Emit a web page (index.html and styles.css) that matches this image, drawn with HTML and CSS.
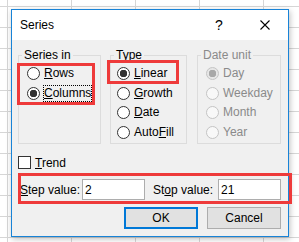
FILE: index.html
```html
<!DOCTYPE html>
<html lang="en">
  <head>
    <meta charset="UTF-8" />
    <title>Series</title>
    <link rel="stylesheet" href="styles.css">
  </head>
  <body>
    <div class="dialog">
      <div class="titlebar">
        <span class="title">Series</span>
        <span class="tb-btn help">?</span>
        <span class="tb-btn close">
          <svg width="10" height="10" viewBox="0 0 10 10">
            <path d="M0.5 0.5L9.5 9.5M9.5 0.5L0.5 9.5" stroke="#000" stroke-width="1.1" fill="none" />
          </svg>
        </span>
      </div>
      <div class="content">
        <div class="groups">
          <fieldset class="group series-in">
            <legend>Series in</legend>
            <div class="rows">
              <div class="opt"><span class="radio"></span><span class="lbl"><u>R</u>ows</span></div>
              <div class="opt"><span class="radio on"></span><span class="lbl focus"><u>C</u>olumns</span></div>
            </div>
          </fieldset>
          <fieldset class="group type">
            <legend>Type</legend>
            <div class="rows">
              <div class="opt"><span class="radio on"></span><span class="lbl"><u>L</u>inear</span></div>
              <div class="opt"><span class="radio"></span><span class="lbl"><u>G</u>rowth</span></div>
              <div class="opt"><span class="radio"></span><span class="lbl"><u>D</u>ate</span></div>
              <div class="opt"><span class="radio"></span><span class="lbl">Auto<u>F</u>ill</span></div>
            </div>
          </fieldset>
          <fieldset class="group date-unit disabled">
            <legend>Date unit</legend>
            <div class="rows">
              <div class="opt"><span class="radio on"></span><span class="lbl">Day</span></div>
              <div class="opt"><span class="radio"></span><span class="lbl">Weekday</span></div>
              <div class="opt"><span class="radio"></span><span class="lbl">Month</span></div>
              <div class="opt"><span class="radio"></span><span class="lbl">Year</span></div>
            </div>
          </fieldset>
        </div>
        <div class="trend">
          <span class="check"></span>
          <span class="trend-lbl"><u>T</u>rend</span>
        </div>
        <div class="values">
          <span class="val-lbl step"><u>S</u>tep value:</span>
          <input class="field" type="text" value="2" />
          <span class="val-lbl stop">St<u>o</u>p value:</span>
          <input class="field" type="text" value="21" />
        </div>
        <div class="actions">
          <button class="btn default">OK</button>
          <button class="btn">Cancel</button>
        </div>
      </div>

      <!-- red annotation boxes -->
      <div class="mark mark-series"></div>
      <div class="mark mark-type"></div>
      <div class="mark mark-values"></div>
    </div>
  </body>
</html>
```

FILE: styles.css
```css
body {
  margin: 0;
  padding: 9px 0 0 11px;
  width: 299px;
  height: 242px;
  box-sizing: border-box;
  overflow: hidden;
  background-color: #fff;
  background-image: linear-gradient(to right, #d6d6d6 1px, transparent 1px),
    linear-gradient(to bottom, #d6d6d6 1px, transparent 1px);
  background-size: 64px 21px;
  background-position: 7px 6px;
  font-family: "Liberation Sans", Arial, sans-serif;
  font-size: 12px;
  color: #000;
}
.dialog {
  position: relative;
  width: 276px;
  height: 226px;
  border: 1px solid #1883d7;
  background-color: #f0f0f0;
  box-shadow: 1px 2px 6px rgba(0, 0, 0, 0.25);
}
.titlebar {
  display: flex;
  align-items: center;
  height: 30px;
  background-color: #fff;
}
.title {
  flex: 1;
  padding-left: 8px;
}
.tb-btn {
  display: flex;
  align-items: center;
  justify-content: center;
  width: 46px;
  height: 30px;
}
.help {
  font-size: 14px;
}
.content {
  padding: 8px 7px 0 6px;
}
.groups {
  display: flex;
}
.group {
  margin: 0;
  padding: 0;
  min-width: 0;
  box-sizing: border-box;
  border: 1px solid #dcdcdc;
}
.series-in {
  width: 83px;
}
.type {
  width: 77px;
  margin-left: 9px;
}
.date-unit {
  width: 84px;
  margin-left: 10px;
}
legend {
  margin-left: 3px;
  padding: 0 2px;
  line-height: 14px;
}
.rows {
  height: 78px;
  padding: 2px 0 1px 8px;
}
.type .rows {
  padding-left: 6px;
}
.opt {
  display: flex;
  align-items: center;
  height: 19.5px;
}
.radio {
  flex: none;
  width: 13px;
  height: 13px;
  box-sizing: border-box;
  border: 1px solid #333;
  border-radius: 50%;
  background-color: #fff;
}
.radio.on {
  background: radial-gradient(circle, #333 0 3.5px, #fff 4px);
}
.lbl {
  margin-left: 3px;
  border: 1px dotted transparent;
  line-height: 15px;
}
.lbl.focus {
  border-color: #000;
}
.disabled legend,
.disabled .lbl {
  color: #8a8a8a;
}
.disabled .radio {
  border-color: #c4c4c4;
  background-color: #f8f8f8;
}
.disabled .radio.on {
  background: radial-gradient(circle, #a8a8a8 0 3.5px, #e6e6e6 4px);
}
.trend {
  display: flex;
  align-items: center;
  height: 15px;
  margin-top: 11px;
}
.check {
  width: 13px;
  height: 13px;
  box-sizing: border-box;
  border: 1px solid #333;
  background-color: #fff;
}
.trend-lbl {
  margin-left: 4px;
}
.values {
  display: flex;
  align-items: center;
  margin-top: 9px;
  padding-left: 2px;
}
.val-lbl {
  white-space: nowrap;
}
.step {
  width: 63px;
}
.stop {
  width: 66px;
  margin-left: 8px;
}
.field {
  width: 63px;
  height: 21px;
  box-sizing: border-box;
  margin: 0;
  padding: 0 2px;
  border: 1px solid #adadad;
  background-color: #fff;
  font-family: inherit;
  font-size: 12px;
  color: #000;
  outline: none;
}
.actions {
  display: flex;
  justify-content: flex-end;
  gap: 9px;
  margin-top: 7px;
}
.btn {
  width: 74px;
  height: 22px;
  box-sizing: border-box;
  margin: 0;
  padding: 0;
  border: 1px solid #adadad;
  background-color: #e1e1e1;
  font-family: inherit;
  font-size: 12px;
  color: #000;
}
.btn.default {
  border: 2px solid #0078d7;
}
.mark {
  position: absolute;
  box-sizing: border-box;
  border: 3px solid #ee3a3a;
}
.mark-series {
  left: 5px;
  top: 53px;
  width: 78px;
  height: 42px;
}
.mark-type {
  left: 95px;
  top: 50px;
  width: 72px;
  height: 24px;
}
.mark-values {
  left: 6px;
  top: 163px;
  width: 274px;
  height: 31px;
}
```
